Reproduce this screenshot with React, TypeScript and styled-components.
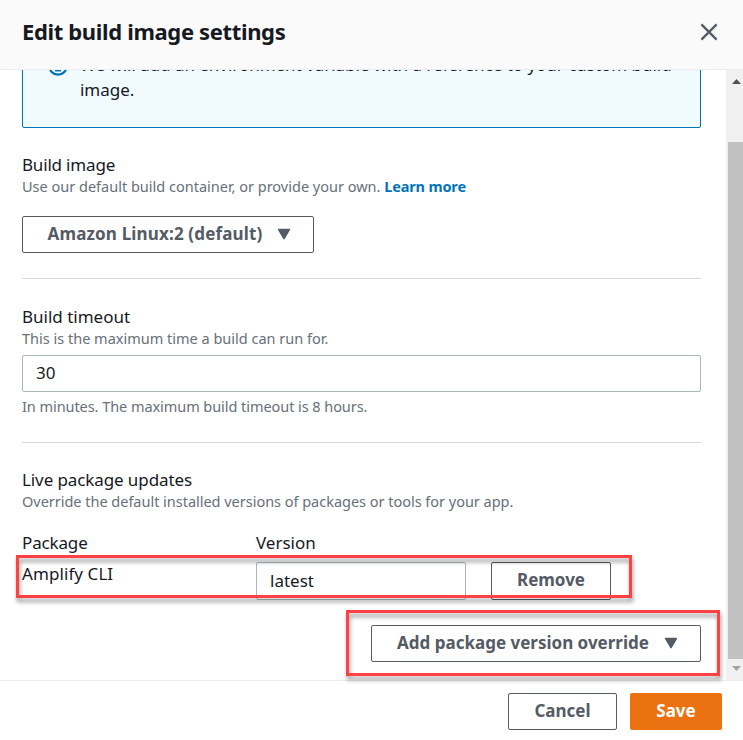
import React from "react";
import styled, { createGlobalStyle } from "styled-components";

const GlobalStyle = createGlobalStyle`
  * { box-sizing: border-box; }
  body {
    margin: 0;
    background: #fff;
    color: #16191f;
    font-family: "Noto Sans", "Open Sans", sans-serif;
    overflow: hidden;
  }
  button, input { font-family: inherit; }
`;

const Modal = styled.div`
  display: flex;
  flex-direction: column;
  width: 743px;
  height: 740px;
  position: relative;
`;

const Header = styled.header`
  flex: 0 0 70px;
  display: flex;
  align-items: center;
  justify-content: space-between;
  padding: 0 24px 5px 22px;
  background: #fafafa;
  border-bottom: 1px solid #eaeded;
`;

const Title = styled.h2`
  margin: 0 0 2px;
  font-size: 22px;
  line-height: 30px;
  font-weight: 700;
  letter-spacing: -0.35px;
  white-space: nowrap;
`;

const CloseButton = styled.button`
  display: flex;
  padding: 0;
  border: 0;
  background: none;
  color: #545b64;
`;

const Body = styled.div`
  flex: 0 0 610px;
  display: flex;
  overflow: hidden;
`;

const Content = styled.div`
  flex: 1;
  padding: 0 25px 0 22px;
`;

const Alert = styled.div`
  display: flex;
  align-items: flex-start;
  gap: 12px;
  height: 98px;
  margin-top: -40px;
  padding: 22px 24px 0 25px;
  border: 1px solid #0073bb;
  border-radius: 2px;
  background: #f1faff;
  svg { flex: none; margin-top: 1px; }
`;

const AlertText = styled.p`
  margin: 0;
  font-size: 17px;
  line-height: 24.5px;
  letter-spacing: -0.03px;
  white-space: nowrap;
`;

const Section = styled.section<{ $top: number; $height: number; $last?: boolean }>`
  display: flex;
  flex-direction: column;
  align-items: flex-start;
  height: ${(p) => p.$height}px;
  padding-top: ${(p) => p.$top}px;
  border-bottom: ${(p) => (p.$last ? "0" : "1px solid #d5dbdb")};
`;

const Label = styled.div<{ $ls?: number; $top?: number }>`
  margin-top: ${(p) => p.$top ?? 0}px;
  font-size: 17px;
  line-height: 22px;
  letter-spacing: ${(p) => p.$ls ?? 0}px;
  white-space: nowrap;
`;

const Hint = styled.div<{ $ls?: number }>`
  margin-bottom: 2px;
  font-size: 14.5px;
  line-height: 20px;
  color: #687078;
  letter-spacing: ${(p) => p.$ls ?? 0}px;
  white-space: nowrap;
`;

const Link = styled.a`
  color: #0073bb;
  font-weight: 700;
  letter-spacing: -0.15px;
`;

const Button = styled.button<{ $w: number; $primary?: boolean; $ls?: number; $h?: number }>`
  display: flex;
  align-items: center;
  justify-content: center;
  width: ${(p) => p.$w}px;
  height: ${(p) => p.$h ?? 37}px;
  padding: 0 0 2px;
  border: 1px solid ${(p) => (p.$primary ? "#ec7211" : "#545b64")};
  border-radius: 2px;
  background: ${(p) => (p.$primary ? "#ec7211" : "#fff")};
  color: ${(p) => (p.$primary ? "#fff" : "#545b64")};
  font-size: 17px;
  font-weight: 700;
  line-height: 22px;
  letter-spacing: ${(p) => p.$ls ?? 0}px;
  white-space: nowrap;
`;

const MenuButton = styled(Button)<{ $top?: number }>`
  gap: 15px;
  margin-top: ${(p) => p.$top ?? 0}px;
  padding-left: 3px;
  svg { margin-top: 1px; }
`;

const Input = styled.input<{ $w: number; $h?: number; $my?: string }>`
  width: ${(p) => p.$w}px;
  height: ${(p) => p.$h ?? 37}px;
  margin: ${(p) => p.$my ?? "0"};
  padding: 0 13px 2px;
  border: 1px solid #aab7b8;
  border-radius: 2px;
  background: #fff;
  color: #16191f;
  font-size: 17px;
`;

const Packages = styled.div`
  display: grid;
  grid-template-columns: 234px 235px 120px;
  grid-template-rows: 30px 38px;
  align-items: start;
  margin-top: 19px;
`;

const Actions = styled.div`
  align-self: flex-end;
  margin-top: 25px;
`;

const Scrollbar = styled.div`
  flex: 0 0 17px;
  display: flex;
  flex-direction: column;
  align-items: flex-end;
  padding: 9px 0 8px;
  background: #f0f0f0;
`;

const Thumb = styled.div`
  width: 15px;
  height: 517px;
  margin: 58px 0 7px;
  background: #c1c1c1;
`;

const Arrow = styled.svg`
  display: block;
  width: 9px;
  height: 5px;
  margin-right: 2px;
`;

const Footer = styled.footer`
  flex: 0 0 60px;
  display: flex;
  justify-content: flex-end;
  gap: 13px;
  padding: 12px 21px 0 0;
  border-top: 1px solid #eaeded;
`;

const Highlight = styled.div<{ $x: number; $y: number; $w: number; $h: number }>`
  position: absolute;
  left: ${(p) => p.$x}px;
  top: ${(p) => p.$y}px;
  width: ${(p) => p.$w}px;
  height: ${(p) => p.$h}px;
  border: 3px solid #ff4141;
  filter: drop-shadow(1px 4px 2px rgba(0, 0, 0, 0.4));
  pointer-events: none;
`;

const Caret = () => (
  <svg width="14" height="12" viewBox="0 0 14 12">
    <path d="M1.7 1.5h10.6L7 10.5z" fill="#545b64" stroke="#545b64" strokeWidth="1.6" strokeLinejoin="round" />
  </svg>
);

export default function App() {
  return (
    <>
      <GlobalStyle />
      <Modal>
        <Header>
          <Title>Edit build image settings</Title>
          <CloseButton aria-label="Close">
            <svg width="20" height="20" viewBox="0 0 20 20">
              <path d="M2.4 2.4l15.2 15.2M17.6 2.4L2.4 17.6" stroke="currentColor" strokeWidth="2.3" />
            </svg>
          </CloseButton>
        </Header>
        <Body>
          <Content>
            <Alert>
              <svg width="20" height="22" viewBox="0 0 20 22" fill="none" stroke="#0073bb" strokeWidth="2.2">
                <circle cx="10" cy="12" r="8.7" />
                <path d="M10 6v2.2M7.5 11H10v5M7 16.5h6" />
              </svg>
              <AlertText>
                We will add an environment variable with a reference to your custom build
                <br />
                image.
              </AlertText>
            </Alert>
            <Section $top={26} $height={151}>
              <Label $ls={-0.18}>Build image</Label>
              <Hint>
                Use our default build container, or provide your own. <Link>Learn more</Link>
              </Hint>
              <MenuButton $w={292} $ls={0.16} $top={18}>
                Amazon Linux:2 (default)
                <Caret />
              </MenuButton>
            </Section>
            <Section $top={27} $height={164}>
              <Label>Build timeout</Label>
              <Hint>This is the maximum time a build can run for.</Hint>
              <Input $w={679} $my="5px 0 4px" defaultValue="30" />
              <Hint $ls={-0.06}>In minutes. The maximum build timeout is 8 hours.</Hint>
            </Section>
            <Section $top={26} $height={237} $last>
              <Label $ls={-0.1}>Live package updates</Label>
              <Hint $ls={-0.02}>Override the default installed versions of packages or tools for your app.</Hint>
              <Packages>
                <Label $ls={-0.15}>Package</Label>
                <Label>Version</Label>
                <span />
                <Label $ls={0.08} $top={1}>Amplify CLI</Label>
                <Input $w={210} $h={38} defaultValue="latest" />
                <Button $w={120} $h={38}>Remove</Button>
              </Packages>
              <Actions>
                <MenuButton $w={330}>
                  Add package version override
                  <Caret />
                </MenuButton>
              </Actions>
            </Section>
          </Content>
          <Scrollbar>
            <Arrow viewBox="0 0 9 5"><path d="M0 5L4.5 0L9 5z" fill="#505050" /></Arrow>
            <Thumb />
            <Arrow viewBox="0 0 9 5"><path d="M0 0h9L4.5 5z" fill="#a3a3a3" /></Arrow>
          </Scrollbar>
        </Body>
        <Footer>
          <Button $w={109}>Cancel</Button>
          <Button $w={92} $primary>Save</Button>
        </Footer>
        <Highlight $x={16} $y={555} $w={616} $h={43} />
        <Highlight $x={346} $y={610} $w={374} $h={66} />
      </Modal>
    </>
  );
}
